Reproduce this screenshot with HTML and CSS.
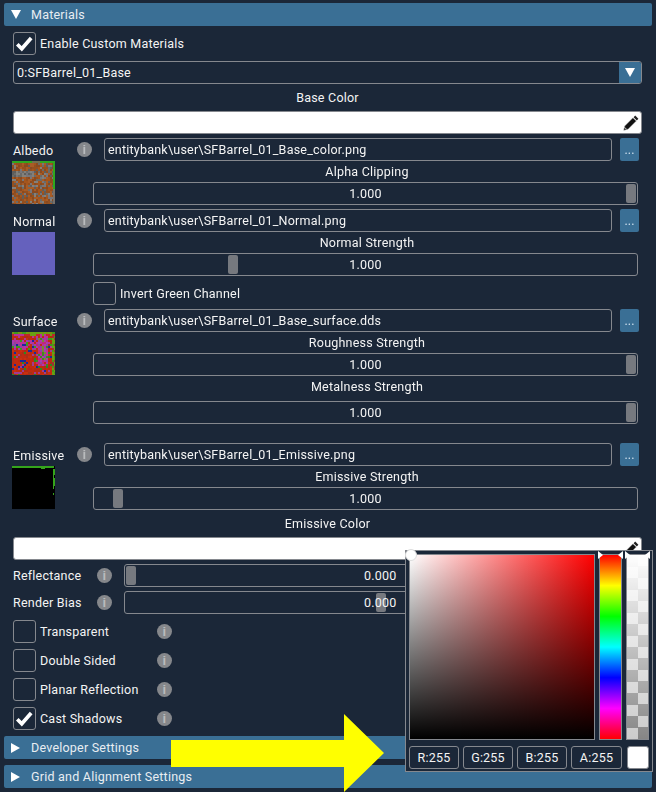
FILE: index.html
```html
<!DOCTYPE html>
<html lang="en">
<head>
<meta charset="utf-8">
<title>Materials</title>
<link rel="stylesheet" href="styles.css">
</head>
<body>
<main class="win">
  <svg width="0" height="0" class="defs">
    <defs>
      <symbol id="check" viewBox="0 0 23 23"><path d="M3.6 12.4l4.9 4.9L18.8 5.4" fill="none" stroke="#fff" stroke-width="4"/></symbol>
      <symbol id="pencil" viewBox="0 0 16 16"><path d="M12.2.6l3.2 3.2-1.6 1.6-3.2-3.2z" fill="#222"/><path d="M9.9 2.9l3.2 3.2-8 8-4.3 1.1 1.1-4.3z" fill="#111" stroke="#777" stroke-width=".5"/><path d="M1.6 12.3l2.1 2.1" stroke="#e0e0e0" stroke-width="1"/></symbol>
    </defs>
  </svg>

  <header class="hdr"><i class="tri-down"></i><span>Materials</span></header>
  <div class="body">
    <label class="chk"><span class="box"><svg><use href="#check"/></svg></span>Enable Custom Materials</label>
    <div class="combo"><span>0:SFBarrel_01_Base</span><b class="combo-btn"><i class="tri-down"></i></b></div>
    <div class="cap cap-base">Base Color</div>
    <div class="color"><svg class="pen"><use href="#pencil"/></svg></div>

    <section class="tex">
      <div class="side"><div class="side-label">Albedo</div><canvas class="thumb" width="43" height="43" data-kind="albedo"></canvas></div>
      <div class="main">
        <div class="file"><span class="info">i</span><div class="input">entitybank\user\SFBarrel_01_Base_color.png</div><button class="dots">...</button></div>
        <div class="cap">Alpha Clipping</div>
        <div class="slider"><i class="knob knob-end"></i><span>1.000</span></div>
      </div>
    </section>

    <section class="tex">
      <div class="side"><div class="side-label">Normal</div><canvas class="thumb" width="43" height="43" data-kind="normal"></canvas></div>
      <div class="main">
        <div class="file"><span class="info">i</span><div class="input">entitybank\user\SFBarrel_01_Normal.png</div><button class="dots">...</button></div>
        <div class="cap">Normal Strength</div>
        <div class="slider"><i class="knob knob-mid"></i><span>1.000</span></div>
        <label class="chk chk-inv"><span class="box"></span>Invert Green Channel</label>
      </div>
    </section>

    <section class="tex">
      <div class="side"><div class="side-label">Surface</div><canvas class="thumb" width="43" height="43" data-kind="surface"></canvas></div>
      <div class="main">
        <div class="file"><span class="info">i</span><div class="input">entitybank\user\SFBarrel_01_Base_surface.dds</div><button class="dots">...</button></div>
        <div class="cap">Roughness Strength</div>
        <div class="slider"><i class="knob knob-end"></i><span>1.000</span></div>
        <div class="cap cap-metal">Metalness Strength</div>
        <div class="slider"><i class="knob knob-end"></i><span>1.000</span></div>
      </div>
    </section>

    <section class="tex tex-em">
      <div class="side"><div class="side-label">Emissive</div><canvas class="thumb" width="43" height="43" data-kind="emissive"></canvas></div>
      <div class="main">
        <div class="file"><span class="info">i</span><div class="input">entitybank\user\SFBarrel_01_Emissive.png</div><button class="dots">...</button></div>
        <div class="cap">Emissive Strength</div>
        <div class="slider"><i class="knob knob-low"></i><span>1.000</span></div>
      </div>
    </section>

    <div class="cap cap-emc">Emissive Color</div>
    <div class="color"><svg class="pen"><use href="#pencil"/></svg></div>

    <div class="prop"><span class="prop-label">Reflectance</span><span class="info">i</span><div class="slider slider-wide"><i class="knob knob-zero"></i><span>0.000</span></div></div>
    <div class="prop prop-2"><span class="prop-label">Render Bias</span><span class="info">i</span><div class="slider slider-wide"><i class="knob knob-bias"></i><span>0.000</span></div></div>

    <div class="flag"><label class="chk"><span class="box"></span>Transparent</label><span class="info">i</span></div>
    <div class="flag"><label class="chk"><span class="box"></span>Double Sided</label><span class="info">i</span></div>
    <div class="flag"><label class="chk"><span class="box"></span>Planar Reflection</label><span class="info">i</span></div>
    <div class="flag"><label class="chk"><span class="box"><svg><use href="#check"/></svg></span>Cast Shadows</label><span class="info">i</span></div>
  </div>
  <header class="hdr hdr-dev"><i class="tri-right"></i><span>Developer Settings</span></header>
  <header class="hdr hdr-grid"><i class="tri-right"></i><span>Grid and Alignment Settings</span></header>
</main>

<aside class="picker">
  <div class="picker-top">
    <div class="sv"><i class="sv-dot"></i></div>
    <div class="hue"><i class="mark-l"></i><i class="mark-r"></i></div>
    <div class="alpha"><i class="mark-l"></i><i class="mark-r"></i></div>
  </div>
  <div class="picker-bot">
    <div class="chan">R:255</div>
    <div class="chan">G:255</div>
    <div class="chan">B:255</div>
    <div class="chan chan-a">A:255</div>
    <div class="swatch"></div>
  </div>
</aside>

<svg class="arrow" width="216" height="80" viewBox="0 0 216 80"><path d="M0 26H173V0L213 39 173 78V53H0z" fill="#ffff00"/></svg>
<script src="script.js"></script>
</body>
</html>
```
FILE: styles.css
```css
* { box-sizing: border-box; }
html, body { margin: 0; height: 100%; }
body {
  width: 656px; height: 792px; overflow: hidden; position: relative;
  background: #1b2738; color: #f4f4f4;
  font: 12.5px/16px Roboto, "Liberation Sans", sans-serif;
  letter-spacing: .22px;
}
.defs { position: absolute; }
.win { padding: 3px 4px 0; }
.hdr {
  height: 23px; background: #3a6f95; border-radius: 2px;
  display: flex; align-items: center; color: #e8edf2; padding-left: 7px;
}
.hdr > span { margin-left: 10px; }
.hdr-dev { margin-top: 6px; }
.hdr-grid { margin-top: 6px; }
.tri-down { display: block; width: 0; height: 0; border-left: 5px solid transparent; border-right: 5px solid transparent; border-top: 9px solid #fff; }
.tri-right { display: block; width: 0; height: 0; border-top: 5px solid transparent; border-bottom: 5px solid transparent; border-left: 9px solid #fff; margin-right: 1px; }
.body { padding: 6px 10px 0 9px; }
.chk { display: flex; align-items: center; gap: 4px; height: 23px; }
.box { width: 23px; height: 23px; border: 1px solid #85888e; border-radius: 3px; display: block; flex: none; }
.box svg { display: block; width: 21px; height: 21px; }
.combo {
  height: 23px; margin-top: 6px; border: 1px solid #85888e; border-radius: 3px;
  display: flex; justify-content: space-between; align-items: center; padding-left: 3px; overflow: hidden;
}
.combo-btn { width: 22px; height: 21px; background: #3a6f95; display: flex; align-items: center; justify-content: center; }
.cap { text-align: center; height: 21px; line-height: 21px; padding-left: 19px; width: 561px; }
.cap-base { margin-top: 3px; height: 24px; line-height: 21px; width: 629px; padding-left: 0; }
.cap-emc { height: 27px; line-height: 27px; width: 629px; padding-left: 0; }
.cap-metal { height: 25px; line-height: 21px; }
.color { height: 23px; width: 629px; background: #fff; border: 1px solid #85888e; border-radius: 3px; display: flex; justify-content: flex-end; align-items: center; padding-right: 2px; }
.pen { width: 16px; height: 16px; display: block; }
.tex { display: flex; margin-top: 4px; width: 629px; }
.tex-em { margin-top: 19px; }
.side { width: 64px; flex: none; }
.side-label { height: 23px; line-height: 25px; }
.thumb { display: block; width: 43px; height: 43px; margin-left: -1px; image-rendering: pixelated; }
.main { flex: 1; display: flex; flex-direction: column; }
.file { display: flex; align-items: center; height: 23px; }
.info {
  width: 15px; height: 15px; border-radius: 50%; background: #85878b; color: #b9bbbd;
  font: 700 13px/15px "Liberation Sans", sans-serif; text-align: center; flex: none; display: block;
}
.input { width: 508px; margin-left: 12px; height: 23px; border: 1px solid #85888e; border-radius: 3px; padding-left: 3px; line-height: 21px; flex: none; }
.dots { width: 19px; height: 23px; margin-left: 8px; padding: 0; border: 0; border-radius: 2px; background: #3a6f95; color: #cfe0ee; font: 12.5px/23px Roboto, sans-serif; flex: none; }
.slider {
  position: relative; height: 23px; margin-left: 16px; width: 545px;
  border: 1px solid #85888e; border-radius: 3px; text-align: center; line-height: 21px;
}
.slider > span { position: relative; }
.knob { position: absolute; top: 1px; width: 10px; height: 19px; border-radius: 2px; background: #76797f; }
.knob-end { right: 1px; }
.knob-mid { left: 134px; }
.knob-low { left: 19px; }
.knob-zero { left: 1px; }
.knob-bias { left: 251px; }
.chk-inv { margin: 6px 0 0 16px; }
.prop { display: flex; align-items: center; height: 23px; margin-top: 4px; position: relative; }
.prop-label { width: 84px; flex: none; }
.prop .slider { margin-left: 12px; }
.slider-wide { width: 518px; flex: none; text-align: left; }
.slider-wide > span { position: absolute; left: 239px; top: 0; }
.prop-2 { margin-top: 4px; }
.flag { display: flex; align-items: center; height: 23px; margin-top: 6px; }
.flag .chk { width: 144px; }
.picker {
  position: absolute; left: 405px; top: 550px; width: 248px; height: 222px;
  background: #1b2738; border: 1px solid #85888e; padding: 3px 3px 0;
}
.picker-top { display: flex; height: 186px; }
.sv {
  position: relative; width: 186px; height: 186px; border: 1px solid #85888e;
  background: linear-gradient(to bottom, transparent, #000), linear-gradient(to right, #fff, #f00);
}
.sv-dot { position: absolute; left: -5px; top: -6px; width: 12px; height: 12px; border-radius: 50%; background: #fff; border: 1px solid #ddd; }
.hue {
  position: relative; width: 23px; margin-left: 4px; border: 1px solid #85888e;
  background: linear-gradient(to bottom, #f00, #ff0 16.66%, #0f0 33.33%, #0ff 50%, #00f 66.66%, #f0f 83.33%, #f00);
}
.alpha {
  position: relative; width: 23px; margin-left: 4px; border: 1px solid #85888e;
  background: linear-gradient(to bottom, #fff, rgba(255,255,255,0)),
    repeating-conic-gradient(#ccc 0 25%, #868686 0 50%) left bottom / 22px 23px;
}
.mark-l, .mark-r { position: absolute; top: -4px; width: 0; height: 0; border-top: 4px solid transparent; border-bottom: 4px solid transparent; }
.mark-l { left: -2px; border-left: 5px solid #fff; }
.mark-r { right: -2px; border-right: 5px solid #fff; }
.picker-bot { display: flex; margin-top: 6px; }
.chan { width: 50px; height: 23px; margin-right: 4px; border: 1px solid #85888e; border-radius: 3px; text-align: center; line-height: 21px; }
.chan-a { width: 51px; margin-right: 5px; }
.swatch { width: 22px; height: 23px; background: #fff; border: 1px solid #85888e; border-radius: 3px; }
.arrow { position: absolute; left: 171px; top: 714px; }
```
FILE: script.js
```js
(function () {
  var seed = 11;
  function r() { seed = (seed * 16807) % 2147483647; return seed / 2147483647; }
  function px(c, x, y, w, h, col) { c.fillStyle = col; c.fillRect(x, y, w, h); }
  function pick(a) { return a[Math.floor(r() * a.length)]; }
  var GR = ['#6b6b68', '#78767a', '#5f5e5c', '#83807a'];
  var OR = ['#a5551c', '#94501f', '#a85c26', '#8a4a20'];
  var draw = {
    albedo: function (c) {
      px(c, 0, 0, 43, 43, '#9c5420');
      for (var y = 2; y < 43; y += 2) for (var x = 0; x < 41; x += 2) {
        var p = .25;
        if (y >= 10 && y < 16 && x < 24) p = .9;
        if (y >= 10 && y < 16 && x >= 24 && x < 36) p = .45;
        if (x >= 30 && x < 38 && y < 36) p = .6;
        if (y >= 2 && y < 8 && x > 8 && x < 34) p = .12;
        if (y % 8 < 2 && y > 20) p = .5;
        px(c, x, y, 2, 2, r() < p ? pick(GR) : pick(OR));
      }
      px(c, 0, 0, 41, 2, '#2ea81e');
      px(c, 20, 0, 8, 2, '#6f7050');
      px(c, 41, 0, 2, 28, '#2ea81e');
      px(c, 41, 28, 2, 15, '#77706a');
    },
    normal: function (c) { px(c, 0, 0, 43, 43, '#6561bd'); },
    surface: function (c) {
      var MAG = ['#b8309a', '#a83cb0', '#b8309a', '#8c46a0', '#c02878'];
      var RED = ['#c02a10', '#b82810', '#c83010', '#c02a10', '#a83018'];
      for (var y = 0; y < 43; y += 2) for (var x = 0; x < 43; x += 2) {
        var col;
        if (y < 2) col = pick(['#6aa012', '#3f9a1a', '#7a9010']);
        else if (y < 4) col = pick(['#c02828', '#b8309a', '#6aa012']);
        else if (x >= 39) col = pick(['#4a9a18', '#6aa012', '#a03030']);
        else if (x >= 24 && x < 36 && y >= 4 && y < 34) col = r() < .7 ? pick(MAG) : pick(['#3f8a20', '#c02a10', '#7a8a30']);
        else if (y >= 8 && y < 18 && x < 24) col = r() < .65 ? pick(MAG) : pick(['#3f9a1a', '#c02a10', '#1a2a9a']);
        else if (y >= 18) col = r() < .8 ? pick(RED) : pick(['#1a2a9a', '#2a8a20', '#a03c90']);
        else col = r() < .6 ? pick(RED) : pick(['#3f9a1a', '#1a2a9a', '#b8309a']);
        px(c, x, y, 2, 2, col);
      }
    },
    emissive: function (c) {
      px(c, 0, 0, 43, 43, '#000');
      px(c, 0, 0, 42, 2, '#35a41c');
      px(c, 29, 2, 4, 1, '#35a41c');
      px(c, 41, 3, 2, 6, '#35a41c');
      px(c, 41, 9, 1, 3, '#35a41c');
      px(c, 41, 12, 2, 8, '#35a41c');
      px(c, 41, 20, 1, 3, '#35a41c');
      px(c, 41, 27, 1, 2, '#35a41c');
    }
  };
  document.querySelectorAll('canvas[data-kind]').forEach(function (el) {
    draw[el.dataset.kind](el.getContext('2d'));
  });
})();
```
